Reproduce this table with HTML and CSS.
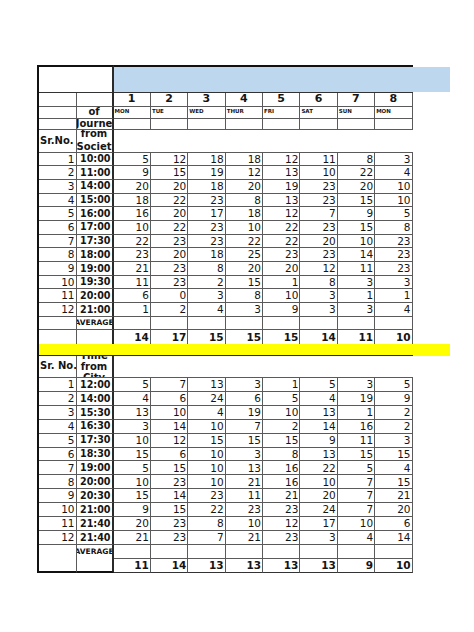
FILE: index.html
```html
<!DOCTYPE html>
<html>
<head>
<meta charset="utf-8">
<link rel="stylesheet" href="styles.css">
</head>
<body>
<div class="sheet">
  <!-- row 1 -->
  <div class="c a tl"></div><div class="c banner blue"></div><div class="ext blue first"></div>
  <!-- row 2 -->
  <div class="c a"></div><div class="c b"></div>
  <div class="c h">1</div><div class="c h">2</div><div class="c h">3</div><div class="c h">4</div><div class="c h">5</div><div class="c h">6</div><div class="c h">7</div><div class="c h">8</div>
  <!-- row 3 -->
  <div class="c a"></div><div class="c b lbl">of</div>
  <div class="c d">MON</div><div class="c d">TUE</div><div class="c d">WED</div><div class="c d">THUR</div><div class="c d">FRI</div><div class="c d">SAT</div><div class="c d">SUN</div><div class="c d">MON</div>
  <!-- row 4 -->
  <div class="c a"></div><div class="c b lbl">Journe</div>
  <div class="c"></div><div class="c"></div><div class="c"></div><div class="c"></div><div class="c"></div><div class="c"></div><div class="c"></div><div class="c"></div>
  <!-- row 5 -->
  <div class="c a sr">Sr.No.</div><div class="c b lbl stack two"><span>from</span><span>Societ</span></div><div class="c merged"></div>

  <div class="c a n">1</div><div class="c b t">10:00</div><div class="c n">5</div><div class="c n">12</div><div class="c n">18</div><div class="c n">18</div><div class="c n">12</div><div class="c n">11</div><div class="c n">8</div><div class="c n">3</div>
  <div class="c a n">2</div><div class="c b t">11:00</div><div class="c n">9</div><div class="c n">15</div><div class="c n">19</div><div class="c n">12</div><div class="c n">13</div><div class="c n">10</div><div class="c n">22</div><div class="c n">4</div>
  <div class="c a n">3</div><div class="c b t">14:00</div><div class="c n">20</div><div class="c n">20</div><div class="c n">18</div><div class="c n">20</div><div class="c n">19</div><div class="c n">23</div><div class="c n">20</div><div class="c n">10</div>
  <div class="c a n">4</div><div class="c b t">15:00</div><div class="c n">18</div><div class="c n">22</div><div class="c n">23</div><div class="c n">8</div><div class="c n">13</div><div class="c n">23</div><div class="c n">15</div><div class="c n">10</div>
  <div class="c a n">5</div><div class="c b t">16:00</div><div class="c n">16</div><div class="c n">20</div><div class="c n">17</div><div class="c n">18</div><div class="c n">12</div><div class="c n">7</div><div class="c n">9</div><div class="c n">5</div>
  <div class="c a n">6</div><div class="c b t">17:00</div><div class="c n">10</div><div class="c n">22</div><div class="c n">23</div><div class="c n">10</div><div class="c n">22</div><div class="c n">23</div><div class="c n">15</div><div class="c n">8</div>
  <div class="c a n">7</div><div class="c b t">17:30</div><div class="c n">22</div><div class="c n">23</div><div class="c n">23</div><div class="c n">22</div><div class="c n">22</div><div class="c n">20</div><div class="c n">10</div><div class="c n">23</div>
  <div class="c a n">8</div><div class="c b t">18:00</div><div class="c n">23</div><div class="c n">20</div><div class="c n">18</div><div class="c n">25</div><div class="c n">23</div><div class="c n">23</div><div class="c n">14</div><div class="c n">23</div>
  <div class="c a n">9</div><div class="c b t">19:00</div><div class="c n">21</div><div class="c n">23</div><div class="c n">8</div><div class="c n">20</div><div class="c n">20</div><div class="c n">12</div><div class="c n">11</div><div class="c n">23</div>
  <div class="c a n">10</div><div class="c b t">19:30</div><div class="c n">11</div><div class="c n">23</div><div class="c n">2</div><div class="c n">15</div><div class="c n">1</div><div class="c n">8</div><div class="c n">3</div><div class="c n">3</div>
  <div class="c a n">11</div><div class="c b t">20:00</div><div class="c n">6</div><div class="c n">0</div><div class="c n">3</div><div class="c n">8</div><div class="c n">10</div><div class="c n">3</div><div class="c n">1</div><div class="c n">1</div>
  <div class="c a n">12</div><div class="c b t">21:00</div><div class="c n">1</div><div class="c n">2</div><div class="c n">4</div><div class="c n">3</div><div class="c n">9</div><div class="c n">3</div><div class="c n">3</div><div class="c n">4</div>

  <div class="c a"></div><div class="c b avg">AVERAGE</div>
  <div class="c"></div><div class="c"></div><div class="c"></div><div class="c"></div><div class="c"></div><div class="c"></div><div class="c"></div><div class="c"></div>
  <div class="c a open"></div><div class="c b open"></div>
  <div class="c n av open">14</div><div class="c n av open">17</div><div class="c n av open">15</div><div class="c n av open">15</div><div class="c n av open">15</div><div class="c n av open">14</div><div class="c n av open">11</div><div class="c n av open">10</div>

  <div class="c a band yellow"></div><div class="ext yellow"></div>

  <div class="c a sr">Sr. No.</div><div class="c b lbl stack three"><span>Time</span><span>from</span><span>City</span></div><div class="c merged"></div>

  <div class="c a n">1</div><div class="c b t">12:00</div><div class="c n">5</div><div class="c n">7</div><div class="c n">13</div><div class="c n">3</div><div class="c n">1</div><div class="c n">5</div><div class="c n">3</div><div class="c n">5</div>
  <div class="c a n">2</div><div class="c b t">14:00</div><div class="c n">4</div><div class="c n">6</div><div class="c n">24</div><div class="c n">6</div><div class="c n">5</div><div class="c n">4</div><div class="c n">19</div><div class="c n">9</div>
  <div class="c a n">3</div><div class="c b t">15:30</div><div class="c n">13</div><div class="c n">10</div><div class="c n">4</div><div class="c n">19</div><div class="c n">10</div><div class="c n">13</div><div class="c n">1</div><div class="c n">2</div>
  <div class="c a n">4</div><div class="c b t">16:30</div><div class="c n">3</div><div class="c n">14</div><div class="c n">10</div><div class="c n">7</div><div class="c n">2</div><div class="c n">14</div><div class="c n">16</div><div class="c n">2</div>
  <div class="c a n">5</div><div class="c b t">17:30</div><div class="c n">10</div><div class="c n">12</div><div class="c n">15</div><div class="c n">15</div><div class="c n">15</div><div class="c n">9</div><div class="c n">11</div><div class="c n">3</div>
  <div class="c a n">6</div><div class="c b t">18:30</div><div class="c n">15</div><div class="c n">6</div><div class="c n">10</div><div class="c n">3</div><div class="c n">8</div><div class="c n">13</div><div class="c n">15</div><div class="c n">15</div>
  <div class="c a n">7</div><div class="c b t">19:00</div><div class="c n">5</div><div class="c n">15</div><div class="c n">10</div><div class="c n">13</div><div class="c n">16</div><div class="c n">22</div><div class="c n">5</div><div class="c n">4</div>
  <div class="c a n">8</div><div class="c b t">20:00</div><div class="c n">10</div><div class="c n">23</div><div class="c n">10</div><div class="c n">21</div><div class="c n">16</div><div class="c n">10</div><div class="c n">7</div><div class="c n">15</div>
  <div class="c a n">9</div><div class="c b t">20:30</div><div class="c n">15</div><div class="c n">14</div><div class="c n">23</div><div class="c n">11</div><div class="c n">21</div><div class="c n">20</div><div class="c n">7</div><div class="c n">21</div>
  <div class="c a n">10</div><div class="c b t">21:00</div><div class="c n">9</div><div class="c n">15</div><div class="c n">22</div><div class="c n">23</div><div class="c n">23</div><div class="c n">24</div><div class="c n">7</div><div class="c n">20</div>
  <div class="c a n">11</div><div class="c b t">21:40</div><div class="c n">20</div><div class="c n">23</div><div class="c n">8</div><div class="c n">10</div><div class="c n">12</div><div class="c n">17</div><div class="c n">10</div><div class="c n">6</div>
  <div class="c a n">12</div><div class="c b t">21:40</div><div class="c n">21</div><div class="c n">23</div><div class="c n">7</div><div class="c n">21</div><div class="c n">23</div><div class="c n">3</div><div class="c n">4</div><div class="c n">14</div>

  <div class="c a tall foot"></div><div class="c b avg tall foot top">AVERAGE</div>
  <div class="c"></div><div class="c"></div><div class="c"></div><div class="c"></div><div class="c"></div><div class="c"></div><div class="c"></div><div class="c"></div>
  <div class="c n av last col3">11</div><div class="c n av last">14</div><div class="c n av last">13</div><div class="c n av last">13</div><div class="c n av last">13</div><div class="c n av last">13</div><div class="c n av last">9</div><div class="c n av last">10</div>
</div>
</body>
</html>
```

FILE: styles.css
```css
* {
  box-sizing: border-box;
}

body {
  margin: 0;
  padding: 65px 0 0 37px;
  background: #ffffff;
  font-family: "DejaVu Sans", "Liberation Sans", sans-serif;
  color: #151515;
}

.sheet {
  display: grid;
  grid-template-columns: 37.5px 37px repeat(8, 37.375px) 37px;
  grid-template-rows:
    27.5px 14px 12px 11px 23px
    repeat(12, 13.7px)
    13.3px 13.8px 12px 22.3px
    repeat(12, 13.9px)
    14px 13.7px;
  width: max-content;
  border-left: 2px solid #111;
}

.c {
  display: flex;
  align-items: center;
  overflow: hidden;
  white-space: nowrap;
  border-right: 1px solid #5a5a5a;
  border-bottom: 1px solid #5a5a5a;
  font-size: 10.5px;
  line-height: 1;
}

.a {
  grid-column-start: 1;
}

.b {
  border-right: 2px solid #2a2a2a;
}

.col3 {
  grid-column-start: 3;
}

/* title row */
.tl {
  grid-column: 1 / span 2;
  border-top: 2px solid #111;
  border-right: 2px solid #2a2a2a;
  border-bottom-color: #333;
}

.banner {
  grid-column: span 8;
  border-top: 2px solid #111;
  border-right: none;
  border-bottom-color: #333;
}

.blue {
  background: #bdd7ee;
}

.yellow {
  background: #ffff00;
}

.ext.first {
  margin-top: 2px;
  margin-bottom: 1px;
}

/* header cells */
.h {
  justify-content: center;
  font-weight: bold;
  font-size: 11px;
  padding-bottom: 1px;
}

.d {
  font-weight: bold;
  font-size: 5.5px;
  padding-left: 1px;
  padding-bottom: 1px;
}

.lbl {
  justify-content: center;
  font-weight: bold;
  font-size: 10px;
}

.stack {
  flex-direction: column;
  justify-content: center;
  align-items: center;
}

.stack.two {
  line-height: 12.5px;
}

.stack.three {
  line-height: 11px;
}

.sr {
  font-weight: bold;
  font-size: 10px;
  padding-left: 1px;
}

.merged {
  grid-column: span 8;
  border-right: none;
}

/* data */
.n {
  justify-content: flex-end;
  padding-right: 1px;
}

.t {
  justify-content: flex-end;
  padding-right: 1px;
  font-weight: bold;
  font-size: 9.6px;
}

.avg {
  justify-content: center;
  font-weight: bold;
  font-size: 7.5px;
}

.av {
  font-weight: bold;
  font-size: 10.5px;
}

.open {
  border-bottom: none;
}

.band {
  grid-column: 1 / span 10;
  border-right: none;
  border-bottom: 1px solid #2a2a2a;
}

.tall {
  grid-row: span 2;
}

.top {
  align-items: flex-start;
  padding-top: 3px;
}

.foot {
  border-bottom: 2px solid #111;
}

.last {
  border-bottom: 1px solid #333;
}
```
